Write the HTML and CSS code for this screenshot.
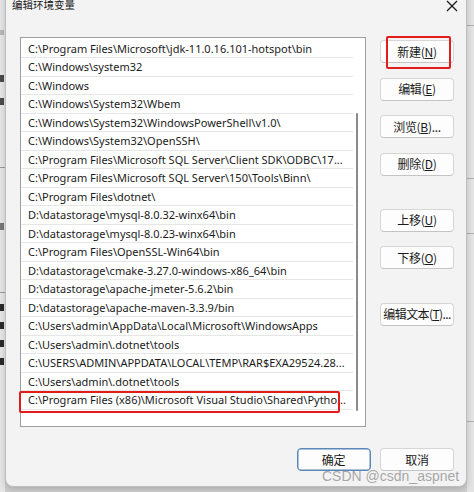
FILE: index.html
```html
<!DOCTYPE html>
<html>
<head>
<meta charset="utf-8">
<link rel="stylesheet" href="styles.css">
</head>
<body>
<div class="screen">
  <div class="behind-left">
    <span class="frag f1"></span>
    <span class="frag f2"></span>
    <span class="frag f3"></span>
    <span class="hline"></span>
    <span class="frag f4"></span>
    <span class="hline"></span>
    <span class="frag f5"></span>
    <span class="frag f5"></span>
    <span class="frag f5"></span>
    <span class="frag f5"></span>
  </div>
  <div class="dialog">
    <div class="titlebar">
      <span class="title">编辑环境变量</span>
      <span class="close"><svg width="12" height="12" viewBox="0 0 12 12"><line x1="1" y1="1" x2="11" y2="11" stroke="#1a1a1a" stroke-width="1.3"/><line x1="11" y1="1" x2="1" y2="11" stroke="#1a1a1a" stroke-width="1.3"/></svg></span>
    </div>
    <div class="content">
      <div class="listbox">
        <div class="rows">
          <div class="row">C:\Program Files\Microsoft\jdk-11.0.16.101-hotspot\bin</div>
          <div class="row">C:\Windows\system32</div>
          <div class="row">C:\Windows</div>
          <div class="row">C:\Windows\System32\Wbem</div>
          <div class="row">C:\Windows\System32\WindowsPowerShell\v1.0\</div>
          <div class="row">C:\Windows\System32\OpenSSH\</div>
          <div class="row">C:\Program Files\Microsoft SQL Server\Client SDK\ODBC\17...</div>
          <div class="row">C:\Program Files\Microsoft SQL Server\150\Tools\Binn\</div>
          <div class="row">C:\Program Files\dotnet\</div>
          <div class="row">D:\datastorage\mysql-8.0.32-winx64\bin</div>
          <div class="row">D:\datastorage\mysql-8.0.23-winx64\bin</div>
          <div class="row">C:\Program Files\OpenSSL-Win64\bin</div>
          <div class="row">D:\datastorage\cmake-3.27.0-windows-x86_64\bin</div>
          <div class="row">D:\datastorage\apache-jmeter-5.6.2\bin</div>
          <div class="row">D:\datastorage\apache-maven-3.3.9/bin</div>
          <div class="row">C:\Users\admin\AppData\Local\Microsoft\WindowsApps</div>
          <div class="row">C:\Users\admin\.dotnet\tools</div>
          <div class="row">C:\USERS\ADMIN\APPDATA\LOCAL\TEMP\RAR$EXA29524.28...</div>
          <div class="row">C:\Users\admin\.dotnet\tools</div>
          <div class="row last">C:\Program Files (x86)\Microsoft Visual Studio\Shared\Pytho...</div>
        </div>
        <div class="scroll"><div class="thumb"></div></div>
        <div class="redbox row-mark"></div>
      </div>
      <div class="side">
        <div class="btn-wrap">
          <button class="btn">新建(<u>N</u>)</button>
          <div class="redbox btn-mark"></div>
        </div>
        <button class="btn">编辑(<u>E</u>)</button>
        <button class="btn">浏览(<u>B</u>)...</button>
        <button class="btn">删除(<u>D</u>)</button>
        <button class="btn spaced">上移(<u>U</u>)</button>
        <button class="btn">下移(<u>O</u>)</button>
        <button class="btn spaced tight">编辑文本(<u>T</u>)...</button>
      </div>
    </div>
    <div class="footer">
      <button class="btn primary">确定</button>
      <button class="btn">取消</button>
    </div>
    <div class="watermark">CSDN @csdn_aspnet</div>
  </div>
  <div class="behind-right">
    <span class="rl r1"></span>
    <span class="rl r2"></span>
    <span class="rl r3"></span>
    <span class="rl r4"></span>
  </div>
</div>
</body>
</html>
```
FILE: styles.css
```css
* { box-sizing: border-box; }
html, body {
  margin: 0;
  padding: 0;
  width: 474px;
  height: 492px;
  overflow: hidden;
  background: #cfcfcf;
  font-family: "Noto Sans", "Noto Sans CJK SC", sans-serif;
}
.screen {
  display: flex;
  width: 474px;
  height: 492px;
  align-items: flex-start;
}
.behind-left {
  width: 5px;
  height: 492px;
  flex: none;
  background: #e6e6e6;
  display: flex;
  flex-direction: column;
  overflow: hidden;
}
.frag { display: block; height: 7px; width: 4px; background: #4a4a4a; }
.f1 { margin-top: 30px; height: 5px; background: #b8b8b8; }
.f2 { margin-top: 40px; }
.f3 { margin-top: 16px; }
.hline { display: block; height: 1px; background: #9a9a9a; margin-top: 62px; }
.f4 { margin-top: 55px; background: #777; }
.f5 { margin-top: 11px; background: #2a2a2a; }
.behind-right {
  width: 7px;
  height: 492px;
  flex: none;
  background: #e3e3e3;
  display: flex;
  flex-direction: column;
}
.rl { display: block; height: 1px; background: #b0b0b0; }
.r1 { margin-top: 25px; }
.r2 { margin-top: 152px; }
.r3 { margin-top: 54px; }
.r4 { margin-top: 187px; }
.dialog {
  position: relative;
  width: 462px;
  height: 499px;
  margin-top: -12px;
  flex: none;
  background: #f3f3f3;
  border: 1px solid #bdbdbd;
  border-radius: 8px;
  box-shadow: 0 2px 6px rgba(0,0,0,0.18);
  display: flex;
  flex-direction: column;
}
.titlebar {
  height: 48px;
  display: flex;
  align-items: flex-start;
  padding: 9px 8px 0 6px;
}
.title {
  flex: 1;
  font-family: "Noto Sans CJK SC", sans-serif;
  font-size: 10.5px;
  line-height: 14px;
  color: #1a1a1a;
}
.close {
  display: block;
  flex: none;
  width: 12px;
  height: 12px;
  margin-top: 2px;
}
.close svg { display: block; }
.content {
  display: flex;
  padding: 0 12px 0 14px;
  gap: 14px;
}
.listbox {
  position: relative;
  width: 346px;
  height: 390px;
  background: #fff;
  border: 1px solid #9d9d9d;
  display: flex;
  padding-top: 1.8px;
}
.rows {
  width: 332px;
  display: flex;
  flex-direction: column;
}
.row {
  height: 18.5px;
  line-height: 17.5px;
  border-bottom: 1px solid #e6e6e6;
  padding-left: 7px;
  font-size: 11px;
  color: #1b1b1b;
  white-space: nowrap;
  overflow: hidden;
}
.scroll {
  flex: 1;
  padding-left: 3px;
  padding-top: 73px;
}
.thumb {
  width: 2px;
  height: 298px;
  background: #8a8a8a;
  border-radius: 1px;
}
.redbox {
  position: absolute;
  border: 2px solid #e21b1b;
  border-radius: 2px;
}
.row-mark {
  left: -2px;
  top: 353px;
  width: 321px;
  height: 22px;
}
.side {
  width: 74px;
  display: flex;
  flex-direction: column;
  gap: 14.6px;
  padding-top: 3px;
}
.btn-wrap { position: relative; }
.btn-mark {
  left: 6px;
  top: -4px;
  width: 65px;
  height: 33px;
}
.btn {
  display: block;
  width: 74px;
  height: 23px;
  padding: 0;
  background: #fdfdfd;
  border: 1px solid #d6d6d6;
  border-bottom-color: #c4c4c4;
  border-radius: 4px;
  font-family: "Noto Sans CJK SC", sans-serif;
  font-size: 12px;
  line-height: 20px;
  color: #1a1a1a;
  text-align: center;
  white-space: nowrap;
  letter-spacing: -0.3px;
}
.tight { letter-spacing: -0.6px; }
.btn u { text-decoration: underline; text-underline-offset: 1px; }
.spaced { margin-top: 18.5px; }
.footer {
  display: flex;
  justify-content: flex-end;
  gap: 9.5px;
  padding: 21px 12px 0 0;
}
.primary {
  border: 1px solid #5b86b8;
  box-shadow: inset 0 0 0 0.5px #5b86b8;
}
.watermark {
  position: absolute;
  left: 316px;
  top: 479px;
  font-family: "Liberation Sans", sans-serif;
  font-size: 14px;
  line-height: 17px;
  color: rgba(140,140,140,0.75);
  white-space: nowrap;
}
```
